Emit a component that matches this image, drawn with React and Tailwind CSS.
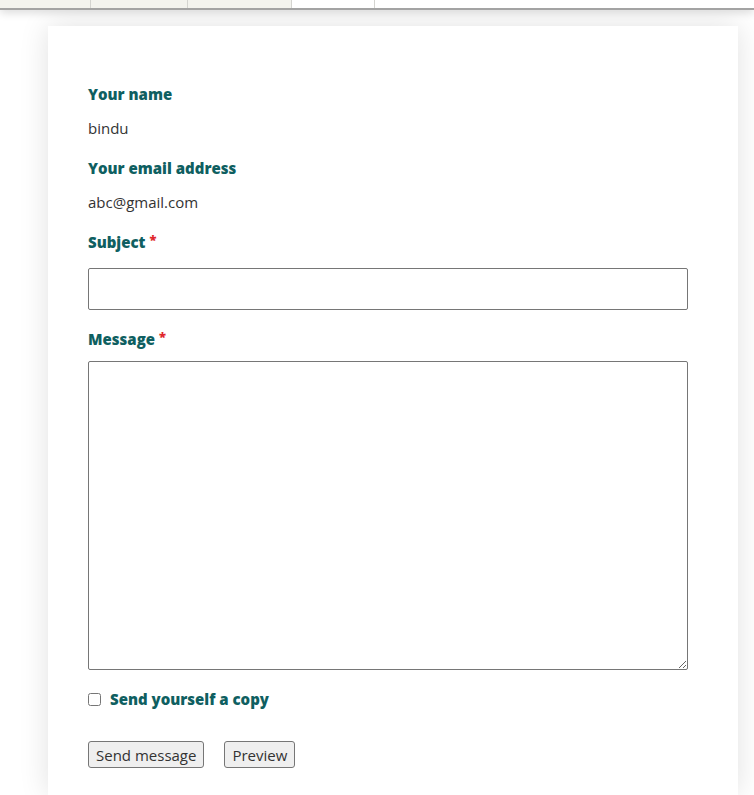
import React from "react";

export default function App() {
  return (
    <div className="min-h-[795px] bg-white font-['Open_Sans',sans-serif] text-[#333]">
      <div className="relative z-10 flex h-[10px] border-b-2 border-[#a3a3a3] bg-white shadow-[0_3px_8px_rgba(0,0,0,0.14)]">
        <div className="w-[91px] border-r border-[#d4d4d0] bg-[#f3f3ee]" />
        <div className="w-[97px] border-r border-[#d4d4d0] bg-[#f3f3ee]" />
        <div className="w-[104px] border-r border-[#d4d4d0] bg-[#f3f3ee]" />
        <div className="w-[83px] border-r border-[#d4d4d0] bg-white" />
        <div className="flex-1 bg-white" />
      </div>
      <div className="bg-white pt-[16px] pl-[48px] pr-[16px]">
        <div className="h-[769px] w-[690px] bg-white pl-[40px] pr-[50px] pt-[58px] shadow-[0_0_28px_rgba(0,0,0,0.12)]">
          <div className="h-[20px] text-[15px] font-extrabold leading-[20px] text-[#0f5f61]">Your name</div>
          <div className="mt-[14px] h-[20px] text-[15px] leading-[20px]">bindu</div>
          <div className="mt-[20px] h-[20px] text-[15px] font-extrabold leading-[20px] text-[#0f5f61]">Your email address</div>
          <div className="mt-[14px] h-[20px] text-[15px] leading-[20px]">abc@gmail.com</div>
          <div className="mt-[20px] flex h-[20px] items-start text-[15px] font-extrabold leading-[20px] text-[#0f5f61]">
            <span>Subject</span>
            <span className="ml-[4px] mt-[-1px] text-[13px] leading-[16px] text-[#e0262b]">*</span>
          </div>
          <input
            type="text"
            className="mt-[16px] block h-[42px] w-[600px] rounded-[2px] border border-[#767676] bg-white px-2 text-[15px] outline-none"
          />
          <div className="mt-[19px] flex h-[20px] items-start text-[15px] font-extrabold leading-[20px] text-[#0f5f61]">
            <span>Message</span>
            <span className="ml-[4px] mt-[-1px] text-[13px] leading-[16px] text-[#e0262b]">*</span>
          </div>
          <textarea className="mt-[12px] block h-[309px] w-[600px] resize-y rounded-[2px] border border-[#767676] bg-white p-2 text-[15px] outline-none" />
          <div className="mt-[19px] flex h-[20px] items-center">
            <input type="checkbox" className="m-0 h-[13px] w-[13px]" />
            <span className="ml-[9px] text-[15px] font-extrabold leading-[20px] text-[#0f5f61]">Send yourself a copy</span>
          </div>
          <div className="mt-[32px] flex gap-[20px]">
            <button className="h-[27px] rounded-[3px] border border-[#767676] bg-[#efefef] px-[7px] text-[15px] leading-[20px] text-[#333]">
              Send message
            </button>
            <button className="h-[27px] rounded-[3px] border border-[#767676] bg-[#efefef] px-[7px] text-[15px] leading-[20px] text-[#333]">
              Preview
            </button>
          </div>
        </div>
      </div>
    </div>
  );
}
